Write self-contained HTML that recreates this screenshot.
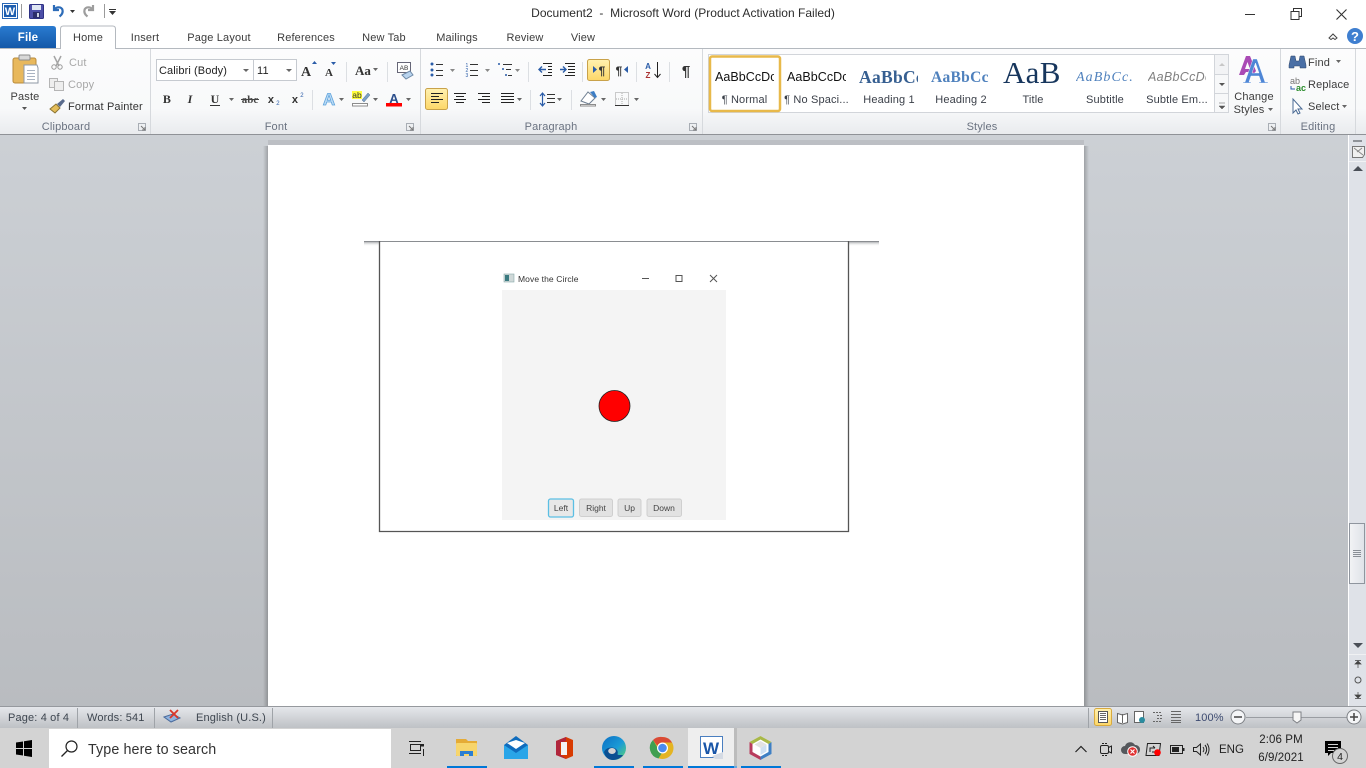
<!DOCTYPE html>
<html><head><meta charset="utf-8"><title>Document2 - Microsoft Word</title>
<style>
html,body{margin:0;padding:0;width:1366px;height:768px;overflow:hidden;background:#fff}
svg{display:block}
text{font-family:"Liberation Sans",sans-serif;font-size:11px;fill:#3c3c3c;letter-spacing:.15px}
.c{text-anchor:middle}
.g{fill:#6a7280}
.d{fill:#a8a8a8}
.s{font-size:11px;fill:#3a3f48}
.ic{fill:none;stroke:#333;stroke-width:1}
</style></head><body>
<svg width="1366" height="768" viewBox="0 0 1366 768" xmlns="http://www.w3.org/2000/svg">
<defs>
<linearGradient id="rib" x1="0" y1="0" x2="0" y2="1"><stop offset="0" stop-color="#fcfcfd"/><stop offset=".7" stop-color="#f8f9fa"/><stop offset="1" stop-color="#e9ebee"/></linearGradient>
<linearGradient id="bg" x1="0" y1="0" x2="0" y2="1"><stop offset="0" stop-color="#ccd0d5"/><stop offset="1" stop-color="#b9bcc0"/></linearGradient>
<linearGradient id="st" x1="0" y1="0" x2="0" y2="1"><stop offset="0" stop-color="#e5e7eb"/><stop offset="1" stop-color="#bec1c5"/></linearGradient>
<linearGradient id="fb" x1="0" y1="0" x2="0" y2="1"><stop offset="0" stop-color="#2a7bd0"/><stop offset="1" stop-color="#1458a8"/></linearGradient>
<linearGradient id="ho" x1="0" y1="0" x2="0" y2="1"><stop offset="0" stop-color="#fff1b0"/><stop offset="1" stop-color="#fdd768"/></linearGradient>
<linearGradient id="sh" x1="0" y1="0" x2="1" y2="0"><stop offset="0" stop-color="#000" stop-opacity=".22"/><stop offset="1" stop-color="#000" stop-opacity="0"/></linearGradient>
<linearGradient id="sb" x1="0" y1="0" x2="1" y2="0"><stop offset="0" stop-color="#f2f3f5"/><stop offset="1" stop-color="#dfe2e8"/></linearGradient>
<linearGradient id="ol" x1="0" y1="0" x2="0" y2="1"><stop offset="0" stop-color="#8a8d91"/><stop offset="1" stop-color="#f2f2f2" stop-opacity="0"/></linearGradient>
<linearGradient id="edge" x1="0" y1="0" x2="1" y2="1"><stop offset="0" stop-color="#0c6fc4"/><stop offset=".55" stop-color="#1b9bd6"/><stop offset="1" stop-color="#5ed66f"/></linearGradient>
</defs>

<!-- Title bar -->
<rect width="1366" height="49" fill="#fff"/>
<rect x="2.500" y="3.500" width="15" height="15" fill="#fff" stroke="#2a67b5"/>
<rect x="4" y="5" width="12" height="12" fill="#1f5fb0"/>
<text x="10" y="15" class="c" style="font-size:11px;font-weight:bold;fill:#fff;letter-spacing:0">W</text>
<path d="M21.500 4v14M104.500 4v14" stroke="#9a9a9a"/>
<rect x="29.500" y="4.500" width="14" height="14" rx="1" fill="#4d4fa8" stroke="#2f3284"/>
<rect x="32" y="5" width="9" height="5" fill="#dfe6f3"/><rect x="33" y="12" width="7" height="6" fill="#2b2d6a"/><rect x="37" y="13" width="2" height="4" fill="#c9cfe0"/>
<path d="M54 5v5h5M54.500 9.500c2-3 7-3 8 .5 .7 3-1 5-3 6.500" fill="none" stroke="#2d6cb8" stroke-width="2.200"/>
<path d="M70 10h5l-2.500 3z" fill="#333"/>
<path d="M93 5v5h-5M92.500 9.500c-2-3-7-3-8 .5-.7 3 1 5 3 6.500" fill="none" stroke="#9d9d9d" stroke-width="2.200"/>
<path d="M109 9.500h7" stroke="#333"/><path d="M109 11h7l-3.500 4z" fill="#333"/>
<text x="683" y="17" class="c" style="font-size:12px;fill:#2c2c2c;letter-spacing:.02px">Document2&#160;&#160;-&#160;&#160;Microsoft Word (Product Activation Failed)</text>
<path d="M1245 14.500h10" stroke="#333"/>
<path d="M1291 11.500h8v8h-8zM1293.500 11v-2.500h8v8h-2.500" fill="none" stroke="#333"/>
<path d="M1336.500 9.500l10 10M1346.500 9.500l-10 10" stroke="#333" stroke-width="1.100"/>

<!-- Ribbon -->
<rect y="49" width="1366" height="85" fill="url(#rib)"/>
<rect y="48" width="1366" height="1" fill="#b4b9bf"/>
<rect y="134" width="1366" height="1" fill="#8f9297"/>
<path d="M150.500 49v85M420.500 49v85M702.500 49v85M1280.500 49v85M1355.500 49v85" stroke="#d6d9dd"/>

<!-- Tabs -->
<path d="M0 48V29q0-3 3-3h50q3 0 3 3v19z" fill="url(#fb)"/>
<text x="28" y="41" class="c" style="font-size:11.500px;font-weight:bold;fill:#fff">File</text>
<path d="M60.500 49V29q0-3 3-3h49q3 0 3 3v20" fill="#fff" stroke="#b4b9bf"/>
<rect x="61" y="47" width="54" height="3" fill="#fff"/>
<text x="88" y="41" class="c">Home</text>
<text x="145" y="41" class="c">Insert</text>
<text x="219" y="41" class="c">Page Layout</text>
<text x="306" y="41" class="c">References</text>
<text x="384" y="41" class="c">New Tab</text>
<text x="457" y="41" class="c">Mailings</text>
<text x="525" y="41" class="c">Review</text>
<text x="583" y="41" class="c">View</text>
<path d="M1329 38l4-4 4 4-2 1.500-2-1.500-2 1.500z" fill="none" stroke="#444"/>
<circle cx="1355" cy="36" r="8" fill="#3f7fd0"/>
<text x="1355" y="41" class="c" style="font-size:13px;font-weight:bold;fill:#fff;letter-spacing:0">?</text>

<!-- Clipboard -->
<rect x="13" y="58" width="23" height="25" rx="2" fill="#e8b85c" stroke="#b98a3a"/>
<rect x="19" y="55" width="11" height="5" rx="1" fill="#d8d8d8" stroke="#8c8c8c"/>
<path d="M24 65h13l1 3v15h-14z" fill="#fff" stroke="#8f98a6"/>
<path d="M27 70.500h8M27 73.500h8M27 76.500h8M27 79.500h8" stroke="#a9b3c2"/>
<text x="25" y="100" class="c">Paste</text>
<path d="M22 107h5l-2.500 3z" fill="#555"/>
<path d="M54 56l5 10M61 56l-5 10" stroke="#a5a5a5" stroke-width="1.500"/>
<circle cx="54" cy="67" r="2.200" fill="none" stroke="#9a9a9a"/><circle cx="60" cy="67" r="2.200" fill="none" stroke="#9a9a9a"/>
<text x="69" y="66" class="d">Cut</text>
<rect x="49.500" y="78.500" width="8" height="9" fill="#eee" stroke="#b5b5b5"/><rect x="54.500" y="81.500" width="9" height="9" fill="#eee" stroke="#b5b5b5"/>
<text x="68" y="88" class="d">Copy</text>
<path d="M50 109l6-5 4 4-5 5z" fill="#e3bd5a" stroke="#8a7332"/><path d="M57 104l6-5 2 2-5 6z" fill="#596b8c"/>
<text x="68" y="110" style="fill:#333">Format Painter</text>
<text x="66" y="130" class="c g">Clipboard</text>
<path d="M138.500 123.500h7v7h-7z" fill="none" stroke="#a8adb4"/><path d="M141 126l4 4m0-3v3h-3" fill="none" stroke="#777"/>

<!-- Font -->
<rect x="156.500" y="59.500" width="140" height="21" fill="#fff" stroke="#c6cad0"/>
<path d="M253.500 60v20" stroke="#c6cad0"/>
<text x="159" y="74" style="fill:#222;letter-spacing:.1px">Calibri (Body)</text>
<path d="M243 69h6l-3 3z" fill="#666"/>
<text x="257" y="74" style="fill:#222">11</text>
<path d="M286 69h6l-3 3z" fill="#666"/>
<text x="301" y="76" style="font-family:'Liberation Serif',serif;font-size:14px;font-weight:bold;fill:#333">A</text>
<path d="M312 64h5l-2.500-3z" fill="#2a5ca8"/>
<text x="325" y="76" style="font-family:'Liberation Serif',serif;font-size:11px;font-weight:bold;fill:#333">A</text>
<path d="M331 62h5l-2.500 3z" fill="#2a5ca8"/>
<path d="M346.500 62v20M387.500 62v20" stroke="#dcdfe3"/>
<text x="355" y="75" style="font-family:'Liberation Serif',serif;font-size:13px;font-weight:bold;fill:#333;letter-spacing:0">Aa</text>
<path d="M373 68h5l-2.500 3z" fill="#666"/>
<rect x="397.500" y="62.500" width="13" height="10" fill="#fff" stroke="#667"/>
<text x="404" y="70" class="c" style="font-size:6.500px;fill:#333;letter-spacing:0">AB</text>
<path d="M402 75l8-4 3 4-7 4z" fill="#b9d4ef" stroke="#6f8aa8"/>
<text x="167" y="103" class="c" style="font-family:'Liberation Serif',serif;font-size:12px;font-weight:bold;fill:#333">B</text>
<text x="190" y="103" class="c" style="font-family:'Liberation Serif',serif;font-size:12px;font-style:italic;font-weight:bold;fill:#333">I</text>
<text x="215" y="103" class="c" style="font-family:'Liberation Serif',serif;font-size:12px;font-weight:bold;fill:#333">U</text>
<path d="M210 105.500h10" stroke="#333"/>
<path d="M229 98h5l-2.500 3z" fill="#666"/>
<text x="250" y="103" class="c" style="font-family:'Liberation Serif',serif;font-size:11px;font-weight:bold;fill:#444;letter-spacing:0">abc</text>
<path d="M241 99.500h18" stroke="#444"/>
<text x="271" y="103" class="c" style="font-size:11px;font-weight:bold;fill:#333">x</text><text x="278" y="105" class="c" style="font-size:6px;fill:#2a5ca8">2</text>
<text x="295" y="103" class="c" style="font-size:11px;font-weight:bold;fill:#333">x</text><text x="302" y="97" class="c" style="font-size:6px;fill:#2a5ca8">2</text>
<path d="M312.500 90v20" stroke="#dcdfe3"/>
<text x="329" y="105" class="c" style="font-size:17px;font-weight:bold;fill:#bcdcf5;stroke:#5ea3dd;stroke-width:.8;letter-spacing:0">A</text>
<path d="M339 98h5l-2.500 3z" fill="#666"/>
<rect x="352" y="91" width="10" height="8" fill="#ffff3c"/>
<text x="357" y="98" class="c" style="font-size:8.500px;fill:#333;letter-spacing:0">ab</text>
<path d="M362 100l6-7 2 2-6 7z" fill="#7aa0c8" stroke="#56718e" stroke-width=".5"/>
<rect x="352.500" y="103.500" width="15" height="2.500" fill="#fff" stroke="#8c8c8c"/>
<path d="M373 98h5l-2.500 3z" fill="#666"/>
<text x="394" y="103" class="c" style="font-size:13px;font-weight:bold;fill:#2c4f8c;letter-spacing:0">A</text>
<rect x="386" y="103" width="16" height="3.500" fill="#f00"/>
<path d="M406 98h5l-2.500 3z" fill="#666"/>
<text x="276" y="130" class="c g">Font</text>
<path d="M406.500 123.500h7v7h-7z" fill="none" stroke="#a8adb4"/><path d="M409 126l4 4m0-3v3h-3" fill="none" stroke="#777"/>

<!-- Paragraph row 1 -->
<g fill="#2a5ca8"><circle cx="432" cy="64" r="1.500"/><circle cx="432" cy="70" r="1.500"/><circle cx="432" cy="75" r="1.500"/></g>
<path d="M436 64.500h7M436 70.500h7M436 75.500h7" stroke="#333"/>
<path d="M450 69h5l-2.500 3z" fill="#888"/>
<text x="467" y="67" class="c" style="font-size:5px;fill:#2a5ca8">1</text><text x="467" y="72" class="c" style="font-size:5px;fill:#2a5ca8">2</text><text x="467" y="77" class="c" style="font-size:5px;fill:#2a5ca8">3</text>
<path d="M470 64.500h8M470 70.500h8M470 75.500h8" stroke="#333"/>
<path d="M485 69h5l-2.500 3z" fill="#888"/>
<path d="M503 64.500h9M506 69.500h5M508 75.500h4" stroke="#333"/>
<g fill="#2a5ca8"><circle cx="499" cy="64" r="1"/><circle cx="503" cy="69" r="1"/><circle cx="506" cy="75" r="1"/></g>
<path d="M515 69h5l-2.500 3z" fill="#888"/>
<path d="M528.500 62v20M582.500 62v20M636.500 62v20M669.500 62v20" stroke="#dcdfe3"/>
<path d="M543 63.500h9M548 66.500h4M548 69.500h4M548 72.500h4M543 75.500h9" stroke="#222"/>
<path d="M546 69.500h-7m3-3l-3 3 3 3" fill="none" stroke="#2a5ca8" stroke-width="1.400"/>
<path d="M565 63.500h10M568 66.500h7M568 69.500h7M568 72.500h7M565 75.500h10" stroke="#222"/>
<path d="M560 69.500h6m-3-3l3 3-3 3" fill="none" stroke="#2a5ca8" stroke-width="1.400"/>
<rect x="587.500" y="59.500" width="22" height="21" rx="2" fill="url(#ho)" stroke="#c9a24a"/>
<path d="M593 66l4 3.500-4 3.500z" fill="#2a5ca8"/>
<text x="602" y="75" class="c" style="font-size:12px;font-weight:bold;fill:#333;letter-spacing:0">¶</text>
<text x="619" y="75" class="c" style="font-size:12px;font-weight:bold;fill:#333;letter-spacing:0">¶</text>
<path d="M628 66l-4 3.500 4 3.500z" fill="#2a5ca8"/>
<text x="648" y="69" class="c" style="font-size:8px;font-weight:bold;fill:#2a5ca8;letter-spacing:0">A</text>
<text x="648" y="78" class="c" style="font-size:8px;font-weight:bold;fill:#a33;letter-spacing:0">Z</text>
<path d="M657.500 62v15m-3-3l3 3.500 3-3.500" fill="none" stroke="#222"/>
<text x="686" y="76" class="c" style="font-size:15px;font-weight:bold;fill:#333;letter-spacing:0">¶</text>

<!-- Paragraph row 2 -->
<rect x="425.500" y="88.500" width="22" height="21" rx="2" fill="url(#ho)" stroke="#c9a24a"/>
<path d="M431 93.500h12M431 96.500h8M431 99.500h12M431 102.500h8" stroke="#222"/>
<path d="M454 93.500h12M456 96.500h8M454 99.500h12M456 102.500h8M478 93.500h12M482 96.500h8M478 99.500h12M482 102.500h8M501 93.500h13M501 96.500h13M501 99.500h13M501 102.500h13" stroke="#222"/>
<path d="M517 98h5l-2.500 3z" fill="#666"/>
<path d="M530.500 90v20M571.500 90v20" stroke="#dcdfe3"/>
<path d="M542.500 93v13m-2.500-10l2.500-3 2.500 3m-5 7l2.500 3 2.500-3" fill="none" stroke="#2a5ca8" stroke-width="1.200"/>
<path d="M547 94.500h8M547 98.500h8M547 102.500h8" stroke="#333"/>
<path d="M557 98h5l-2.500 3z" fill="#666"/>
<path d="M581 101l7-9 7 6-6 6z" fill="#fff" stroke="#6f7f92"/>
<path d="M590 92l5 6 2-1-3-6z" fill="#3a7cc4"/>
<rect x="580.500" y="104.500" width="15" height="1.500" fill="#fff" stroke="#8c8c8c"/>
<path d="M601 98h5l-2.500 3z" fill="#666"/>
<path d="M615.500 92.500h13v13h-13z" fill="none" stroke="#999" stroke-dasharray="1 1"/>
<path d="M622 93v12M616 99h12" stroke="#aaa" stroke-dasharray="1 1"/>
<path d="M615 105.500h14" stroke="#333"/>
<path d="M634 98h5l-2.500 3z" fill="#666"/>
<text x="551" y="130" class="c g">Paragraph</text>
<path d="M689.500 123.500h7v7h-7z" fill="none" stroke="#a8adb4"/><path d="M692 126l4 4m0-3v3h-3" fill="none" stroke="#777"/>

<!-- Styles gallery -->
<rect x="708.500" y="54.500" width="520" height="58" fill="#fff" stroke="#d2d5da"/>
<rect x="710" y="56.500" width="70" height="54.500" rx="2" fill="#fff" stroke="#e8b94a" stroke-width="2.500"/>
<rect x="1214.500" y="54.500" width="14" height="20" fill="#f2f3f5" stroke="#d2d5da"/>
<rect x="1214.500" y="74.500" width="14" height="19" fill="#f7f8f9" stroke="#d2d5da"/>
<rect x="1214.500" y="93.500" width="14" height="19" fill="#f7f8f9" stroke="#d2d5da"/>
<path d="M1219 66h6l-3-3z" fill="#c7c7c7"/><path d="M1219 83h6l-3 3z" fill="#555"/><path d="M1219 103h6M1219 106h6l-3 3z" fill="#555" stroke="#555" stroke-width=".5"/>
<svg x="715" y="60" width="59" height="32"><text x="0" y="21" style="font-size:12.500px;fill:#111;letter-spacing:.05px">AaBbCcDc</text></svg>
<svg x="787" y="60" width="59" height="32"><text x="0" y="21" style="font-size:12.500px;fill:#111;letter-spacing:.05px">AaBbCcDc</text></svg>
<svg x="859" y="60" width="59" height="32"><text x="0" y="23" style="font-family:'Liberation Serif',serif;font-size:17.500px;font-weight:bold;fill:#365f91;letter-spacing:.3px">AaBbCc</text></svg>
<svg x="931" y="60" width="60" height="32"><text x="0" y="22" style="font-family:'Liberation Serif',serif;font-size:15.500px;font-weight:bold;fill:#4f81bd;letter-spacing:.3px">AaBbCc</text></svg>
<svg x="1003" y="63" width="60" height="21"><text x="0" y="20" style="font-family:'Liberation Serif',serif;font-size:31px;fill:#17365d;letter-spacing:.3px">AaB</text></svg>
<svg x="1076" y="60" width="58" height="32"><text x="0" y="21" style="font-family:'Liberation Serif',serif;font-size:14px;font-style:italic;fill:#4f81bd;letter-spacing:1.100px">AaBbCc.</text></svg>
<svg x="1148" y="60" width="58" height="32"><text x="0" y="21" style="font-size:12.500px;font-style:italic;fill:#808080;letter-spacing:.3px">AaBbCcDc</text></svg>
<text x="744.500" y="103" class="c s">¶ Normal</text>
<text x="816.500" y="103" class="c s">¶ No Spaci...</text>
<text x="889" y="103" class="c s">Heading 1</text>
<text x="961" y="103" class="c s">Heading 2</text>
<text x="1033" y="103" class="c s">Title</text>
<text x="1105" y="103" class="c s">Subtitle</text>
<text x="1177" y="103" class="c s">Subtle Em...</text>
<path fill-rule="evenodd" d="M1239 75l7-19h4l6 15-3 4-1-3h-6l-2 3zM1245 69h5l-2.500-7z" fill="#a94ab5"/>
<path fill-rule="evenodd" d="M1243 83v-1h2l8-23h4l8 23h3v1h-9v-1h2l-2-6h-8l-2 6h2v1zM1252 73h7l-3.500-10z" fill="#4e86d6" stroke="#fff" stroke-width=".4"/>
<text x="1254" y="100" class="c">Change</text>
<text x="1249" y="113" class="c">Styles</text>
<path d="M1268 108h5l-2.500 3z" fill="#666"/>
<text x="982" y="130" class="c g">Styles</text>
<path d="M1268.500 123.500h7v7h-7z" fill="none" stroke="#a8adb4"/><path d="M1271 126l4 4m0-3v3h-3" fill="none" stroke="#777"/>

<!-- Editing -->
<path d="M1291 56h4l1 5h3l1-5h4l2 9v3h-6v-2h-6v2h-5v-3z" fill="#4a6fa5" stroke="#2f4668" stroke-width=".5"/>
<text x="1308" y="66">Find</text>
<path d="M1336 60h5l-2.500 3z" fill="#666"/>
<text x="1290" y="84" style="font-size:9px;fill:#777;letter-spacing:0">ab</text>
<text x="1296" y="91" style="font-size:9px;font-weight:bold;fill:#2a8c2a;letter-spacing:0">ac</text>
<path d="M1291 86v3h4" fill="none" stroke="#2a5ca8"/>
<text x="1308" y="88">Replace</text>
<path d="M1293 99v14l3-3 2 4 2-1-2-4h4z" fill="#fff" stroke="#4a6a94"/>
<text x="1308" y="110">Select</text>
<path d="M1342 105h5l-2.500 3z" fill="#666"/>
<text x="1318" y="130" class="c g">Editing</text>

<!-- Document area -->
<rect y="135" width="1348" height="572" fill="url(#bg)"/>
<rect x="1084" y="146" width="5" height="561" fill="url(#sh)"/>
<rect x="263" y="146" width="5" height="561" fill="url(#sh)" transform="matrix(-1 0 0 1 531 0)"/>
<rect x="268" y="140" width="816" height="5" fill="#000" opacity=".08"/>
<rect x="268" y="145" width="816" height="562" fill="#fff"/>

<!-- Embedded picture -->
<rect x="364" y="241" width="515" height="5" fill="url(#ol)"/>
<rect x="380" y="242" width="468" height="289" fill="#fff"/>
<rect x="364" y="241" width="515" height="1" fill="#8a8d91"/>
<path d="M379.500 241v290.500h469V241" fill="none" stroke="#555" stroke-width="1.300"/>
<rect x="504" y="274" width="10" height="8" fill="#cfd8d8" stroke="#8aa" stroke-width=".6"/><rect x="505" y="275" width="4" height="6" fill="#3a7a80"/>
<text x="518" y="282" style="font-size:8.500px;fill:#333;letter-spacing:.1px">Move the Circle</text>
<path d="M642 278.500h7" stroke="#555"/>
<rect x="676" y="275.500" width="6" height="6" fill="none" stroke="#555"/>
<path d="M710 275l7 7m0-7l-7 7" stroke="#555"/>
<rect x="502" y="290" width="224" height="230" fill="#f4f4f4"/>
<circle cx="614.500" cy="406" r="15.500" fill="#ff0000" stroke="#222" stroke-width=".8"/>
<rect x="548.500" y="499" width="25" height="18" rx="2" fill="#e8e8e8" stroke="#5bbfe4" stroke-width="1.300"/>
<rect x="579.500" y="499" width="33" height="17.500" rx="2" fill="#e2e2e2" stroke="#cfcfcf"/>
<rect x="618" y="499" width="23" height="17.500" rx="2" fill="#e2e2e2" stroke="#cfcfcf"/>
<rect x="647" y="499" width="34.500" height="17.500" rx="2" fill="#e2e2e2" stroke="#cfcfcf"/>
<text x="561" y="511" class="c" style="font-size:8.500px;fill:#444;letter-spacing:0">Left</text>
<text x="596" y="511" class="c" style="font-size:8.500px;fill:#444;letter-spacing:0">Right</text>
<text x="629.500" y="511" class="c" style="font-size:8.500px;fill:#444;letter-spacing:0">Up</text>
<text x="664" y="511" class="c" style="font-size:8.500px;fill:#444;letter-spacing:0">Down</text>

<!-- Scrollbar -->
<rect x="1349" y="135" width="17" height="572" fill="#dfe2e8"/>
<rect x="1353" y="140" width="9" height="2" fill="#8e9298"/>
<path d="M1352.500 146.500h12v8l-2 3h-10z" fill="#f0f0f0" stroke="#777"/><path d="M1354 148l9 7M1362 148l-5 4" stroke="#888"/>
<path d="M1349 161.500h17" stroke="#f2f3f5"/>
<path d="M1353 171h10l-5-5z" fill="#4a4f57"/>
<rect x="1349.500" y="523.500" width="15" height="60" fill="url(#sb)" stroke="#8f959e"/>
<path d="M1353 550.500h8M1353 552.500h8M1353 554.500h8M1353 556.500h8" stroke="#8a8f96"/>
<path d="M1353 643h10l-5 5z" fill="#4a4f57"/>
<path d="M1349 654.500h17" stroke="#f0f1f3"/>
<path d="M1355 660.500h6M1358 661l-3 3h6zM1358 663v5" fill="#444" stroke="#444" stroke-width=".7"/>
<circle cx="1358" cy="680" r="3" fill="none" stroke="#555"/>
<path d="M1355 698.500h6M1358 698l-3-3h6zM1358 692v5" fill="#444" stroke="#444" stroke-width=".7"/>

<!-- Status bar -->
<rect y="706" width="1366" height="1" fill="#96999e"/>
<rect y="707" width="1366" height="21" fill="url(#st)"/>
<text x="8" y="721" style="fill:#3e4650">Page: 4 of 4</text>
<path d="M77.500 708v20M154.500 708v20M272.500 708v20M1088.500 708v20" stroke="#9fa3a8"/>
<text x="87" y="721" style="fill:#3e4650">Words: 541</text>
<path d="M164 717l9-3 7 4-9 4z" fill="#8fb3de" stroke="#4a6a9c"/>
<path d="M170 710l8 8M178 710l-8 8" stroke="#d9362a" stroke-width="1.800"/>
<text x="196" y="721" style="fill:#3e4650">English (U.S.)</text>
<rect x="1094.500" y="708.500" width="17" height="17" rx="2" fill="url(#ho)" stroke="#d9aa3e"/>
<rect x="1098.500" y="711.500" width="9" height="11" fill="#fff" stroke="#555"/>
<path d="M1100 713.500h6M1100 715.500h6M1100 717.500h6M1100 719.500h6" stroke="#666"/>
<path d="M1117.500 713.500l5 1.500 5-1.500v9l-5 1.500-5-1.500zM1122.500 714v9" fill="#fff" stroke="#666"/>
<rect x="1134.500" y="711.500" width="9" height="11" fill="#fff" stroke="#666"/><circle cx="1142" cy="720" r="3" fill="#2a8ca0"/>
<path d="M1153 712.500h9M1157 715.500h5M1157 718.500h5M1153 721.500h9" stroke="#666" stroke-dasharray="2 1"/>
<path d="M1171 711.500h10M1171 714.500h10M1171 717.500h10M1171 720.500h10M1171 722.500h10" stroke="#666"/>
<text x="1195" y="721" style="fill:#3c4a70">100%</text>
<circle cx="1238" cy="717" r="7" fill="#f4f5f7" stroke="#7d8085"/><path d="M1234 717h8" stroke="#444" stroke-width="1.500"/>
<path d="M1246 717.500h101" stroke="#9a9da2"/>
<path d="M1293 712h8v8l-4 3-4-3z" fill="#f6f6f6" stroke="#7d8085"/>
<circle cx="1354" cy="717" r="7" fill="#f4f5f7" stroke="#7d8085"/><path d="M1350 717h8M1354 713v8" stroke="#444" stroke-width="1.500"/>

<!-- Taskbar -->
<rect y="728" width="1366" height="40" fill="#d3d3d3"/>
<path d="M16 742.500l7-1v6.500h-7zM24 741.300l8-1.300v8h-8zM16 749h7v6.500l-7-1zM24 749h8v8l-8-1.300z" fill="#000"/>
<rect x="49" y="729" width="342" height="39" fill="#fff"/>
<circle cx="71.500" cy="746.500" r="5.500" fill="none" stroke="#222" stroke-width="1.200"/>
<path d="M67.500 750.500l-6 6" stroke="#222" stroke-width="1.300"/>
<text x="88" y="754" style="font-size:14.300px;fill:#333;letter-spacing:.1px">Type here to search</text>
<path d="M409 741.500h12M409 753.500h12M410.500 744.500h10v6h-10z" fill="none" stroke="#222"/>
<rect x="421" y="744" width="3" height="2.500" fill="#222"/><path d="M423.500 749v7" stroke="#222"/>
<!-- folder -->
<path d="M456 739h10l2 2h9v15h-21z" fill="#e5ab36"/>
<rect x="456" y="743" width="21" height="13" rx="1" fill="#f7d56c"/>
<path d="M460 756v-5h13v5h-4v-2h-5v2z" fill="#2b7ed2"/>
<rect x="447" y="766" width="40" height="2" fill="#0078d7"/>
<!-- mail -->
<path d="M504 745l12-9 12 9v14h-24z" fill="#0f6cbd"/>
<path d="M504 745l12 8 12-8v14h-24z" fill="#29a5e8"/>
<path d="M507 743l9-3 9 3-9 6z" fill="#fff"/>
<!-- office -->
<path d="M556 741l10-4 7 3v16l-7 3-10-4z" fill="#d83b01"/>
<path d="M556 741l10-4v4l-6 2v11l6 5-10-4z" fill="#b0263c"/>
<rect x="561" y="742" width="6" height="13" fill="#f3f3f3"/>
<!-- edge -->
<circle cx="614" cy="748" r="12" fill="url(#edge)"/>
<path d="M604 752c2-5 10-6 13-2 2 3-1 5 2 5h4c-2 3-6 5-10 5-5 0-8-3-9-8z" fill="#0b4f92"/>
<ellipse cx="612" cy="751" rx="3.800" ry="3" fill="#d3d3d3"/>
<rect x="594" y="766" width="40" height="2" fill="#0078d7"/>
<!-- chrome -->
<circle cx="662.500" cy="748" r="11" fill="#e4b422"/>
<path d="M662.500 737a11 11 0 0 1 9.500 5.500h-9.500a5.500 5.500 0 0 0-5 3.500l-4.500-6a11 11 0 0 1 9.500-3z" fill="#da4a35"/>
<path d="M653 740l5 8.500 3.500 5-3 5a11 11 0 0 1-5.500-18.500z" fill="#3f9f51"/>
<circle cx="662.500" cy="748" r="5.500" fill="#fff"/><circle cx="662.500" cy="748" r="4.300" fill="#4a8af0"/>
<rect x="643" y="766" width="40" height="2" fill="#0078d7"/>
<!-- word -->
<rect x="688" y="728" width="46" height="38" fill="#eeeeee"/>
<rect x="734" y="728" width="3" height="38" fill="#bcbcbc"/>
<rect x="700.500" y="736.500" width="22" height="21" fill="#fff" stroke="#4a7fc0"/>
<text x="711" y="754" class="c" style="font-size:17px;font-weight:bold;fill:#1a56a8;letter-spacing:0">W</text>
<path d="M712 756l11-4v7l-8 0z" fill="#d5dbe4"/>
<rect x="688" y="766" width="46" height="2" fill="#0078d7"/><rect x="734" y="766" width="3" height="2" fill="#6aa9e0"/>
<!-- netbeans cube -->
<path d="M760.500 736l11 6v12l-11 6-11-6v-12z" fill="#fff"/>
<path d="M760.500 736l11 6-3 2-8-4.500-8 4.500-3-2z" fill="#a8b848"/>
<path d="M749.500 742l3 2v8l8 4.500v3.500l-11-6z" fill="#b83c5c"/>
<path d="M771.500 742v12l-11 6v-3.500l8-4.500v-8z" fill="#3e7fc4"/>
<path d="M760.500 748l-6-3.500 6-3.500 6 3.500z" fill="#e2e2e2"/>
<path d="M760.500 748v7l6-3.500v-7z" fill="#cfe0f2"/>
<rect x="741" y="766" width="40" height="2" fill="#0078d7"/>

<!-- tray -->
<path d="M1075.500 752l5.500-5.500 5.500 5.500" fill="none" stroke="#222" stroke-width="1.200"/>
<rect x="1100.500" y="745.500" width="8" height="8" rx="1.500" fill="none" stroke="#222"/>
<path d="M1108.500 747.500l3-1.500v7l-3-1.500" fill="none" stroke="#222"/>
<path d="M1102 743.500h6M1102 755.500h6" stroke="#222" stroke-dasharray="2 1"/>
<path d="M1125 754a4 4 0 0 1 0-8 5.500 5.500 0 0 1 10-1 4.500 4.500 0 0 1 1 9z" fill="#55585c"/>
<circle cx="1132.500" cy="751.500" r="4.800" fill="#e03030" stroke="#fff"/>
<path d="M1130.500 749.500l4 4M1134.500 749.500l-4 4" stroke="#fff" stroke-width="1.200"/>
<path d="M1147.500 743.500h13l-1.500 12h-13z" fill="none" stroke="#222"/>
<path d="M1150 752v-4h5m0 0l-2-2m-1 6h3" fill="none" stroke="#222"/>
<circle cx="1157.500" cy="752.500" r="3.300" fill="#f00"/>
<rect x="1170.500" y="745.500" width="12" height="8" fill="none" stroke="#222"/>
<rect x="1172" y="747" width="7" height="5" fill="#222"/><rect x="1183" y="748" width="1.500" height="3" fill="#222"/>
<path d="M1193.500 747.500h3l4-3.500v11l-4-3.500h-3z" fill="none" stroke="#222"/>
<path d="M1203 747a4 4 0 0 1 0 5M1205 745a7 7 0 0 1 0 9M1207 743.500a10 10 0 0 1 0 12" fill="none" stroke="#222"/>
<text x="1219" y="753" style="font-size:11.500px;fill:#222;letter-spacing:0">ENG</text>
<text x="1281" y="743" class="c" style="font-size:11.500px;fill:#222;letter-spacing:.1px">2:06 PM</text>
<text x="1281" y="761" class="c" style="font-size:11.500px;fill:#222;letter-spacing:.1px">6/9/2021</text>
<path d="M1325 741h16v12h-10l-3 3v-3h-3z" fill="#000"/>
<path d="M1328 744.500h10M1328 747.500h10M1328 750.500h6" stroke="#d3d3d3"/>
<circle cx="1340" cy="756" r="7.500" fill="#d3d3d3" stroke="#666"/>
<text x="1340" y="760" class="c" style="font-size:10.500px;fill:#222;letter-spacing:0">4</text>
</svg>
</body></html>
